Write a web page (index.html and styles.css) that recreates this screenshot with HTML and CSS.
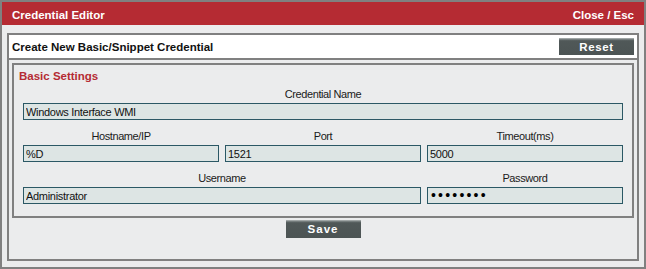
FILE: index.html
```html
<!DOCTYPE html>
<html>
<head>
<meta charset="utf-8">
<title>Credential Editor</title>
<link rel="stylesheet" href="styles.css">
</head>
<body>
<div class="dialog">
  <div class="titlebar">
    <span class="title">Credential Editor</span>
    <span class="close">Close / Esc</span>
  </div>
  <div class="editor">
    <div class="toolbar">
      <span class="heading">Create New Basic/Snippet Credential</span>
      <button class="btn reset" type="button">Reset</button>
    </div>
    <div class="settings">
      <div class="legend">Basic Settings</div>
      <div class="grid">
        <div class="field span3">
          <label class="label">Credential Name</label>
          <input class="input" type="text" value="Windows Interface WMI" readonly>
        </div>
        <div class="field">
          <label class="label">Hostname/IP</label>
          <input class="input" type="text" value="%D" readonly>
        </div>
        <div class="field">
          <label class="label">Port</label>
          <input class="input" type="text" value="1521" readonly>
        </div>
        <div class="field">
          <label class="label">Timeout(ms)</label>
          <input class="input" type="text" value="5000" readonly>
        </div>
        <div class="field span2">
          <label class="label">Username</label>
          <input class="input" type="text" value="Administrator" readonly>
        </div>
        <div class="field">
          <label class="label">Password</label>
          <div class="input secret">&#8226;&#8226;&#8226;&#8226;&#8226;&#8226;&#8226;&#8226;</div>
        </div>
      </div>
    </div>
    <div class="actions">
      <button class="btn save" type="button">Save</button>
    </div>
  </div>
</div>
</body>
</html>
```

FILE: styles.css
```css
html, body {
  margin: 0;
  padding: 0;
  background: #ebeced;
}

.dialog {
  width: 646px;
  height: 269px;
  box-sizing: border-box;
  border: 2px solid #808080;
  background: #ebeced;
  display: flex;
  flex-direction: column;
  font-family: "Liberation Sans", Arial, sans-serif;
}

.titlebar {
  height: 23px;
  box-sizing: border-box;
  background: #b52b33;
  color: #ffffff;
  display: flex;
  justify-content: space-between;
  align-items: center;
  padding: 3px 10px 0 10px;
  font-weight: bold;
  font-size: 11.5px;
}

.editor {
  flex: 1;
  margin: 8px 5px 6px 5px;
  border: 2px solid #808080;
  display: flex;
  flex-direction: column;
}

.toolbar {
  height: 23px;
  background: #ffffff;
  border-bottom: 2px solid #808080;
  display: flex;
  align-items: center;
  justify-content: space-between;
  padding: 0 3px;
}

.heading {
  font-weight: bold;
  font-size: 11.5px;
  color: #111111;
}

.btn {
  width: 75px;
  height: 17px;
  border: 0;
  padding: 0;
  margin: 0;
  color: #ffffff;
  font-family: "Liberation Sans", Arial, sans-serif;
  font-weight: bold;
  font-size: 11.5px;
  letter-spacing: 0.6px;
  background: linear-gradient(#b4b9b9 0, #8a9191 1px, #5f6767 2px, #505858 3px, #4c5454 100%);
  cursor: pointer;
}

.save {
  height: 18px;
  letter-spacing: 1px;
}

.settings {
  margin: 3px 3px 0 3px;
  border: 2px solid #808080;
  padding: 3px 0 12px 0;
}

.legend {
  padding-left: 5px;
  line-height: 16px;
  margin-bottom: 2px;
  font-weight: bold;
  font-size: 11.5px;
  color: #b52b33;
}

.grid {
  display: grid;
  grid-template-columns: repeat(3, 1fr);
  column-gap: 6px;
  row-gap: 8px;
  padding: 0 9px;
}

.span3 {
  grid-column: span 3;
}

.span2 {
  grid-column: span 2;
}

.field {
  display: flex;
  flex-direction: column;
  min-width: 0;
}

.label {
  display: block;
  height: 17px;
  line-height: 17px;
  text-align: center;
  font-family: "Liberation Sans", Arial, sans-serif;
  font-size: 11px;
  letter-spacing: -0.4px;
  color: #1a1a1a;
}

.input {
  display: block;
  width: 100%;
  height: 17px;
  box-sizing: border-box;
  margin: 0;
  border: 1px solid #2b5865;
  background: #dde5e4;
  padding: 0 2px;
  font-family: "Liberation Sans", Arial, sans-serif;
  font-size: 11px;
  letter-spacing: -0.3px;
  line-height: 15px;
  color: #111111;
  outline: none;
}

.secret {
  font-size: 14px;
  letter-spacing: 2.2px;
  line-height: 14px;
  padding-left: 3px;
  color: #000000;
}

.actions {
  margin-top: 2px;
  display: flex;
  justify-content: center;
}
```
